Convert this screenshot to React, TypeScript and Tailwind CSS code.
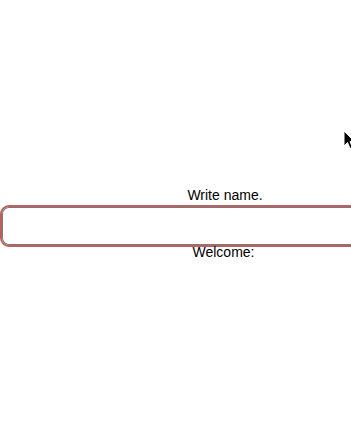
export default function App() {
  return (
    <div className="relative h-[447px] w-[351px] overflow-hidden bg-white" style={{ fontFamily: '"Liberation Sans", Arial, sans-serif' }}>
      <div className="w-[450px] pt-[187px] text-center text-[14px] leading-[16px] text-black">
        <div>Write name.</div>
        <input
          type="text"
          className="mt-[2px] block h-[42px] w-[450px] rounded-[9px] border-2 border-[#c0605c] bg-white shadow-[inset_0_0_0_1px_#7a7a7a] outline-none"
        />
        <div className="-mt-[3px] pr-[3px]">Welcome:</div>
      </div>
      <svg className="absolute left-[343px] top-[130px]" width="12" height="20" viewBox="0 0 12 20">
        <path d="M1 1 L1 16 L4.5 12.5 L7 18.5 L9.5 17.5 L7 11.5 L11.5 11.5 Z" fill="#000" stroke="#fff" strokeWidth="1" />
      </svg>
    </div>
  );
}
